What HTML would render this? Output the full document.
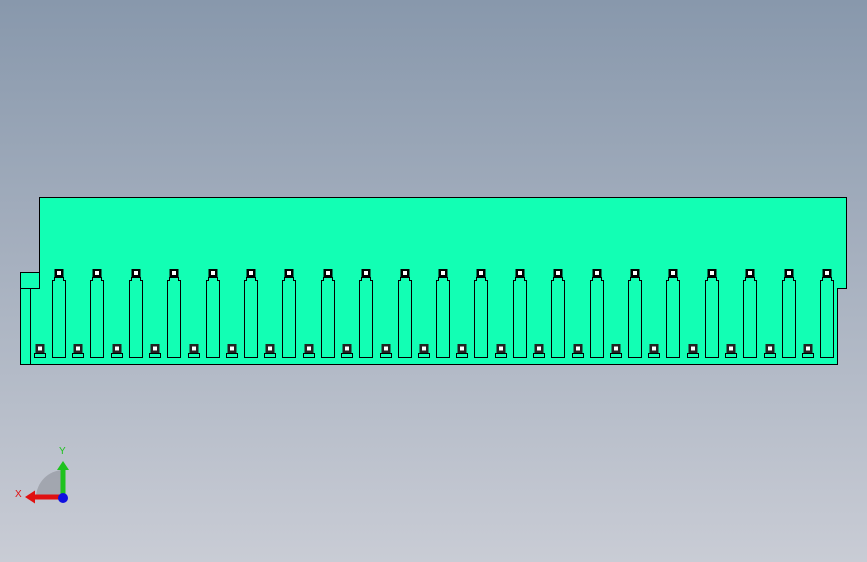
<!DOCTYPE html><html><head><style>html,body{margin:0;padding:0}body{width:867px;height:562px;overflow:hidden;background:linear-gradient(#8898ac,#c9ccd5)}</style></head><body>
<svg width="867" height="562" xmlns="http://www.w3.org/2000/svg" xmlns:xlink="http://www.w3.org/1999/xlink" style="position:absolute;left:0;top:0">
<defs>
<g id="sl">
<path d="M0.5 357.5V280.5H2.5V277.5H11.5V280.5H13.5V357.5Z" fill="none" stroke="#000"/>
<rect x="2.5" y="269" width="9" height="9" fill="#000"/><rect x="5" y="271" width="4" height="4" fill="#fff"/>
</g>
<g id="pd">
<path d="M-0.5 357.5V353.5H10.5V357.5Z" fill="none" stroke="#000"/>
<rect x="0.5" y="344" width="9" height="9" fill="#222"/><rect x="3" y="346.5" width="4" height="4" fill="#fff"/>
</g>
</defs>
<path d="M39.5 197.5H846.5V288.5H837.5V364.5H20.5V272.5H39.5Z" fill="#12ffb4" stroke="#000" stroke-width="1"/>
<path d="M20.5 288.5H39.5V272.5M30.5 288.5V364.5" fill="none" stroke="#000"/>
<use xlink:href="#sl" x="52"/><use xlink:href="#sl" x="90"/><use xlink:href="#sl" x="129"/><use xlink:href="#sl" x="167"/><use xlink:href="#sl" x="206"/><use xlink:href="#sl" x="244"/><use xlink:href="#sl" x="282"/><use xlink:href="#sl" x="321"/><use xlink:href="#sl" x="359"/><use xlink:href="#sl" x="398"/><use xlink:href="#sl" x="436"/><use xlink:href="#sl" x="474"/><use xlink:href="#sl" x="513"/><use xlink:href="#sl" x="551"/><use xlink:href="#sl" x="590"/><use xlink:href="#sl" x="628"/><use xlink:href="#sl" x="666"/><use xlink:href="#sl" x="705"/><use xlink:href="#sl" x="743"/><use xlink:href="#sl" x="782"/><use xlink:href="#sl" x="820"/>
<use xlink:href="#pd" x="35"/><use xlink:href="#pd" x="73"/><use xlink:href="#pd" x="112"/><use xlink:href="#pd" x="150"/><use xlink:href="#pd" x="189"/><use xlink:href="#pd" x="227"/><use xlink:href="#pd" x="265"/><use xlink:href="#pd" x="304"/><use xlink:href="#pd" x="342"/><use xlink:href="#pd" x="381"/><use xlink:href="#pd" x="419"/><use xlink:href="#pd" x="457"/><use xlink:href="#pd" x="496"/><use xlink:href="#pd" x="534"/><use xlink:href="#pd" x="573"/><use xlink:href="#pd" x="611"/><use xlink:href="#pd" x="649"/><use xlink:href="#pd" x="688"/><use xlink:href="#pd" x="726"/><use xlink:href="#pd" x="765"/><use xlink:href="#pd" x="803"/>
<path d="M63 497V470A28 28 0 0 0 36 497Z" fill="#9a9ea6" opacity="0.8"/>
<rect x="60.5" y="469" width="5" height="28" fill="#1ec21e"/>
<path d="M57 470L63 461L69 470Z" fill="#1ec21e"/>
<rect x="34" y="494.5" width="29" height="5" fill="#e01010"/>
<path d="M35 490.5L25 497L35 503.5Z" fill="#e01010"/>
<circle cx="63" cy="498" r="5" fill="#1010e0"/>
<text x="59" y="454" font-family="Liberation Sans,sans-serif" font-size="10" fill="#1ec21e">Y</text>
<text x="15" y="497" font-family="Liberation Sans,sans-serif" font-size="10" fill="#e01010">X</text>
</svg>
</body></html>
